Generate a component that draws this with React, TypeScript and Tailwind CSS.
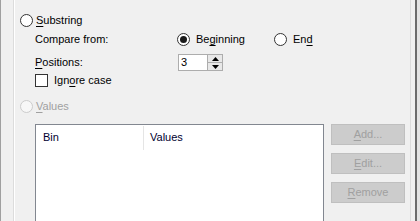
import React from "react";

const font = { fontFamily: '"Liberation Sans", Arial, sans-serif' };

function Radio({ checked = false, disabled = false }: { checked?: boolean; disabled?: boolean }) {
  return (
    <span
      className={
        "flex h-[13px] w-[13px] shrink-0 items-center justify-center rounded-full border " +
        (disabled ? "border-[#cccccc] bg-[#f7f7f7]" : "border-[#333333] bg-white")
      }
    >
      {checked && <span className="h-[7px] w-[7px] rounded-full bg-[#1a1a1a]" />}
    </span>
  );
}

function Key({ children }: { children: React.ReactNode }) {
  return <span className="underline underline-offset-[2px]">{children}</span>;
}

function Arrow({ up }: { up?: boolean }) {
  return (
    <svg width="7" height="4" viewBox="0 0 7 4">
      <path d={up ? "M3.5 0 L7 4 L0 4 Z" : "M0 0 L7 0 L3.5 4 Z"} fill="#000" />
    </svg>
  );
}

function DisabledButton({ children }: { children: React.ReactNode }) {
  return (
    <div className="flex h-[21px] w-[74px] items-center justify-center border border-[#bfbfbf] bg-[#cccccc] text-[11px] text-[#a0a0a0]">
      {children}
    </div>
  );
}

export default function App() {
  return (
    <div
      className="flex h-[221px] w-[420px] overflow-hidden bg-[#f0f0f0] text-[11px] text-black"
      style={font}
    >
      <div className="w-px shrink-0 bg-[#a0a0a0]" />
      <div className="ml-[12px] flex w-[398px] shrink-0 border-l border-r border-[#dcdcdc]">
        <div className="flex w-px bg-white" />
        <div className="flex flex-1 flex-col pl-[5px] pt-[14px]">
          <div className="flex h-[13px] items-center gap-[3px]">
            <Radio />
            <span className="leading-none">
              <Key>S</Key>ubstring
            </span>
          </div>

          <div className="mt-[6px] flex h-[13px] items-center pl-[15px]">
            <span className="w-[142px] leading-none">Compare from:</span>
            <div className="flex w-[97px] items-center gap-[6px]">
              <Radio checked />
              <span className="leading-none">
                Be<Key>g</Key>inning
              </span>
            </div>
            <div className="flex items-center gap-[6px]">
              <Radio />
              <span className="leading-none">
                En<Key>d</Key>
              </span>
            </div>
          </div>

          <div className="mt-[8px] flex h-[17px] items-center pl-[15px]">
            <span className="w-[143px] leading-none">
              <Key>P</Key>ositions:
            </span>
            <div className="flex h-[17px] w-[45px] border border-[#adadad] bg-white">
              <span className="flex-1 pl-[2px] leading-[15px]">3</span>
              <div className="flex w-[15px] flex-col border-l border-[#adadad]">
                <div className="flex flex-1 items-center justify-center border-b border-[#adadad] bg-[#e8e8e8]">
                  <Arrow up />
                </div>
                <div className="flex flex-1 items-center justify-center bg-[#e8e8e8]">
                  <Arrow />
                </div>
              </div>
            </div>
          </div>

          <div className="mt-[3px] flex h-[13px] items-center gap-[6px] pl-[15px]">
            <span className="h-[13px] w-[13px] border border-[#333333] bg-white" />
            <span className="leading-none">
              Ign<Key>o</Key>re case
            </span>
          </div>

          <div className="mt-[13px] flex h-[13px] items-center gap-[3px]">
            <Radio disabled />
            <span className="leading-none text-[#a0a0a0]">
              <Key>V</Key>alues
            </span>
          </div>

          <div className="mt-[11px] flex gap-[7px] pl-[15px]">
            <div className="h-[110px] w-[289px] border border-[#828790] bg-white">
              <div className="flex h-[25px] items-center">
                <span className="w-[107px] pl-[7px] text-[#000030]">Bin</span>
                <span className="h-[24px] w-px bg-[#e5e5e5]" />
                <span className="pl-[6px] text-[#000030]">Values</span>
              </div>
            </div>
            <div className="flex flex-col gap-[8px]">
              <DisabledButton>
                <span>
                  <Key>A</Key>dd...
                </span>
              </DisabledButton>
              <DisabledButton>
                <span>
                  <Key>E</Key>dit...
                </span>
              </DisabledButton>
              <DisabledButton>
                <span>
                  <Key>R</Key>emove
                </span>
              </DisabledButton>
            </div>
          </div>
        </div>
      </div>
      <div className="ml-[4px] w-[2px] shrink-0 bg-[#6b6b6b]" />
      <div className="flex-1 bg-[#e3e3e3]" />
    </div>
  );
}
